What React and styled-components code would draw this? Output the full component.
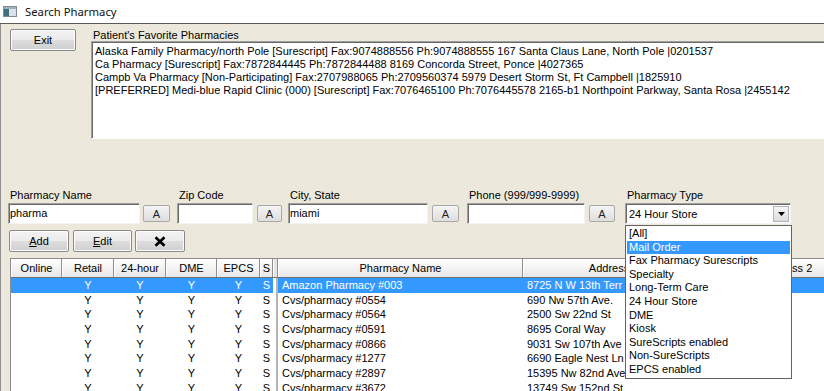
import React from 'react';
import styled, { createGlobalStyle } from 'styled-components';

const GlobalStyle = createGlobalStyle`
  * { box-sizing: border-box; }
  html, body {
    margin: 0;
    padding: 0;
    width: 824px;
    height: 391px;
    overflow: hidden;
    background: #fff;
  }
  body {
    font-family: "Liberation Sans", Arial, sans-serif;
    font-size: 11px;
    color: #000;
  }
`;

const Window = styled.div`
  width: 824px;
  height: 391px;
  display: flex;
  flex-direction: column;
  overflow: hidden;
`;

const TitleBar = styled.div`
  flex: none;
  height: 24px;
  display: flex;
  align-items: center;
  gap: 8px;
  padding-left: 3px;
  background: #fff;
  border-bottom: 1px solid #5a5a5a;
  font-family: "Noto Sans", "DejaVu Sans", sans-serif;
  font-size: 11.3px;
  color: #111;
`;

const Body = styled.div`
  flex: 1;
  position: relative;
  display: flex;
  flex-direction: column;
  background: #ece9dc;
  box-shadow: inset 1px 0 #8f8f8f;
  overflow: hidden;
`;

const TopSection = styled.div`
  display: flex;
  align-items: flex-start;
  padding: 5px 0 0 10px;
`;

const PushButton = styled.button`
  width: ${p => p.$w}px;
  height: ${p => p.$h || 22}px;
  margin-right: ${p => p.$mr || 0}px;
  padding: 0;
  display: flex;
  align-items: center;
  justify-content: center;
  font-family: "Liberation Sans", Arial, sans-serif;
  font-size: 11px;
  color: #000;
  background: linear-gradient(#f3f3f3 0%, #ebebeb 50%, #dddddd 51%, #cfcfcf 100%);
  border: 1px solid #8a8a8a;
  border-radius: 2px;
  box-shadow: inset 0 0 0 1px #fcfcfc;
  flex: none;
`;

const FavGroup = styled.div`
  flex: 1;
  display: flex;
  flex-direction: column;
  margin-left: 15px;
  margin-right: -6px;
`;

const GroupLabel = styled.div`
  line-height: 12px;
  padding-left: 2px;
`;

const ListBox = styled.div`
  height: 98px;
  background: #fff;
  border: 1px solid;
  border-color: #a0a0a0 #fff #fff #a0a0a0;
  box-shadow: inset 1px 1px #696969;
  padding: 3px 0 0 3px;
`;

const ListLine = styled.div`
  line-height: 13px;
  white-space: nowrap;
`;

const FieldRow = styled.div`
  display: flex;
  align-items: flex-end;
  padding-left: 8px;
  margin-top: 50px;
  position: relative;
  z-index: 5;
`;

const Field = styled.div`
  display: flex;
  flex-direction: column;
  margin-left: ${p => p.$ml || 0}px;
  position: relative;
`;

const FieldLabel = styled.div`
  line-height: 13px;
  margin-bottom: 1px;
  padding-left: 2px;
`;

const InputRow = styled.div`
  display: flex;
  align-items: center;
  gap: ${p => p.$gap || 4}px;
`;

const TextBox = styled.div`
  width: ${p => p.$w}px;
  height: 21px;
  background: #fff;
  border: 1px solid;
  border-color: #a0a0a0 #f4f4f4 #f4f4f4 #a0a0a0;
  box-shadow: inset 1px 1px #696969;
  padding: 2px 0 0 1px;
  line-height: 15px;
`;

const SmallButton = styled.div`
  width: ${p => p.$w}px;
  height: 17px;
  display: flex;
  align-items: center;
  justify-content: center;
  background: linear-gradient(#f4f4f4, #dedede);
  border: 1px solid #a9a9a9;
  border-radius: 2px;
  color: #222;
`;

const Combo = styled.div`
  width: 166px;
  height: 21px;
  display: flex;
  align-items: center;
  justify-content: space-between;
  background: #fff;
  border: 1px solid;
  border-color: #a0a0a0 #f4f4f4 #f4f4f4 #a0a0a0;
  box-shadow: inset 1px 1px #696969;
  padding: 1px 1px 0 3px;
`;

const ComboArrow = styled.div`
  width: 16px;
  height: 16px;
  display: flex;
  align-items: center;
  justify-content: center;
  background: linear-gradient(#f6f6f6, #dcdcdc);
  border: 1px solid #b3b3b3;
`;

const DropList = styled.div`
  position: absolute;
  top: calc(100% + 1px);
  left: 0;
  width: 167px;
  padding: 1px;
  background: #fff;
  border: 1px solid #646464;
  z-index: 10;
`;

const DropItem = styled.div`
  line-height: 13.6px;
  padding-left: 2px;
  white-space: nowrap;
  background: ${p => (p.$active ? '#3399ff' : 'transparent')};
  color: ${p => (p.$active ? '#fff' : '#000')};
`;

const ButtonRow = styled.div`
  display: flex;
  padding-left: 9px;
  margin-top: 6px;
`;

const Grid = styled.div`
  flex: 1;
  margin: 6px 0 0 10px;
  background: #fff;
  border-left: 1px solid #8d8d8d;
  border-top: 1px solid #8d8d8d;
  overflow: hidden;
`;

const COLS = '51px 52px 52px 51px 43px 13px 5px 245px 172px 185px';

const HeaderRow = styled.div`
  display: grid;
  grid-template-columns: ${COLS};
  height: 19px;
  background: #d6d3c7;
  border-bottom: 1px solid #6f6f6f;
`;

const HeaderCell = styled.div`
  display: flex;
  align-items: center;
  justify-content: center;
  background: ${p => (p.$divider ? '#e4e4e4' : 'linear-gradient(#ffffff, #f1f1f1 60%, #e6e6e6)')};
  border-right: 1px solid #8e8e8e;
  border-left: 1px solid #fdfdfd;
  white-space: nowrap;
`;

const DataRow = styled.div`
  display: grid;
  grid-template-columns: ${COLS};
  height: 14.7px;
  line-height: 14.7px;
  background: ${p => (p.$selected ? '#3399ff' : '#fff')};
  color: ${p => (p.$selected ? '#fff' : '#000')};
`;

const DataCell = styled.div`
  text-align: ${p => (p.$left ? 'left' : 'center')};
  padding-left: ${p => (p.$left ? 4 : 0)}px;
  white-space: nowrap;
  overflow: hidden;
`;

const DividerCell = styled.div`
  background: #fff;
  border-right: 2px solid #b5b5b5;
`;

const favorites = [
  'Alaska Family Pharmacy/north Pole [Surescript] Fax:9074888556 Ph:9074888555 167 Santa Claus Lane, North Pole |0201537',
  'Ca Pharmacy [Surescript] Fax:7872844445 Ph:7872844488 8169 Concorda Street, Ponce |4027365',
  'Campb Va Pharmacy [Non-Participating] Fax:2707988065 Ph:2709560374 5979 Desert Storm St, Ft Campbell |1825910',
  '[PREFERRED] Medi-blue Rapid Clinic (000) [Surescript] Fax:7076465100 Ph:7076445578 2165-b1 Northpoint Parkway, Santa Rosa |2455142',
];

const pharmacyTypes = [
  '[All]',
  'Mail Order',
  'Fax Pharmacy Surescripts',
  'Specialty',
  'Long-Term Care',
  '24 Hour Store',
  'DME',
  'Kiosk',
  'SureScripts enabled',
  'Non-SureScripts',
  'EPCS enabled',
];

const headers = ['Online', 'Retail', '24-hour', 'DME', 'EPCS', 'S', null, 'Pharmacy Name', 'Address', 'Address 2'];

const results = [
  { name: 'Amazon Pharmacy #003', address: '8725 N W 13th Terr' },
  { name: 'Cvs/pharmacy #0554', address: '690 Nw 57th Ave.' },
  { name: 'Cvs/pharmacy #0564', address: '2500 Sw 22nd St' },
  { name: 'Cvs/pharmacy #0591', address: '8695 Coral Way' },
  { name: 'Cvs/pharmacy #0866', address: '9031 Sw 107th Ave' },
  { name: 'Cvs/pharmacy #1277', address: '6690 Eagle Nest Ln' },
  { name: 'Cvs/pharmacy #2897', address: '15395 Nw 82nd Ave.' },
  { name: 'Cvs/pharmacy #3672', address: '13749 Sw 152nd St' },
];

function AppIcon() {
  return (
    <svg width="14" height="11" viewBox="0 0 14 11">
      <rect x="0.5" y="0.5" width="13" height="10" fill="#d9e3ea" stroke="#7d8b95" />
      <rect x="1" y="1" width="12" height="2" fill="#9fb2bf" />
      <rect x="1" y="3" width="5" height="7" fill="#3f6f7d" />
    </svg>
  );
}

function DeleteIcon() {
  return (
    <svg width="12" height="11" viewBox="0 0 12 11">
      <path d="M1.5 1.2 L10.5 9.8 M10.5 1.2 L1.5 9.8" stroke="#000" strokeWidth="2.6" />
    </svg>
  );
}

function DownArrow() {
  return (
    <svg width="7" height="4" viewBox="0 0 7 4">
      <path d="M0 0 H7 L3.5 4 Z" fill="#000" />
    </svg>
  );
}

export default function App() {
  return (
    <Window>
      <GlobalStyle />
      <TitleBar>
        <AppIcon />
        <span>Search Pharmacy</span>
      </TitleBar>
      <Body>
        <TopSection>
          <PushButton $w={66}>Exit</PushButton>
          <FavGroup>
            <GroupLabel>Patient's Favorite Pharmacies</GroupLabel>
            <ListBox>
              {favorites.map(f => (
                <ListLine key={f}>{f}</ListLine>
              ))}
            </ListBox>
          </FavGroup>
        </TopSection>

        <FieldRow>
          <Field>
            <FieldLabel>Pharmacy Name</FieldLabel>
            <InputRow $gap={3}>
              <TextBox $w={132}>pharma</TextBox>
              <SmallButton $w={27}>A</SmallButton>
            </InputRow>
          </Field>
          <Field $ml={7}>
            <FieldLabel>Zip Code</FieldLabel>
            <InputRow>
              <TextBox $w={76} />
              <SmallButton $w={25}>A</SmallButton>
            </InputRow>
          </Field>
          <Field $ml={6}>
            <FieldLabel>City, State</FieldLabel>
            <InputRow>
              <TextBox $w={140}>miami</TextBox>
              <SmallButton $w={27}>A</SmallButton>
            </InputRow>
          </Field>
          <Field $ml={8}>
            <FieldLabel>Phone (999/999-9999)</FieldLabel>
            <InputRow>
              <TextBox $w={118} />
              <SmallButton $w={26}>A</SmallButton>
            </InputRow>
          </Field>
          <Field $ml={10}>
            <FieldLabel>Pharmacy Type</FieldLabel>
            <Combo>
              <span>24 Hour Store</span>
              <ComboArrow>
                <DownArrow />
              </ComboArrow>
            </Combo>
            <DropList>
              {pharmacyTypes.map(t => (
                <DropItem key={t} $active={t === 'Mail Order'}>
                  {t}
                </DropItem>
              ))}
            </DropList>
          </Field>
        </FieldRow>

        <ButtonRow>
          <PushButton $w={60} $mr={4}>
            <span><u>A</u>dd</span>
          </PushButton>
          <PushButton $w={59} $mr={3}>
            <span><u>E</u>dit</span>
          </PushButton>
          <PushButton $w={50}>
            <DeleteIcon />
          </PushButton>
        </ButtonRow>

        <Grid>
          <HeaderRow>
            {headers.map((h, i) => (
              <HeaderCell key={i} $divider={h === null}>
                {h}
              </HeaderCell>
            ))}
          </HeaderRow>
          {results.map((r, i) => (
            <DataRow key={r.name} $selected={i === 0}>
              <DataCell />
              <DataCell>Y</DataCell>
              <DataCell>Y</DataCell>
              <DataCell>Y</DataCell>
              <DataCell>Y</DataCell>
              <DataCell>S</DataCell>
              <DividerCell />
              <DataCell $left>{r.name}</DataCell>
              <DataCell $left>{r.address}</DataCell>
              <DataCell $left />
            </DataRow>
          ))}
        </Grid>
      </Body>
    </Window>
  );
}
